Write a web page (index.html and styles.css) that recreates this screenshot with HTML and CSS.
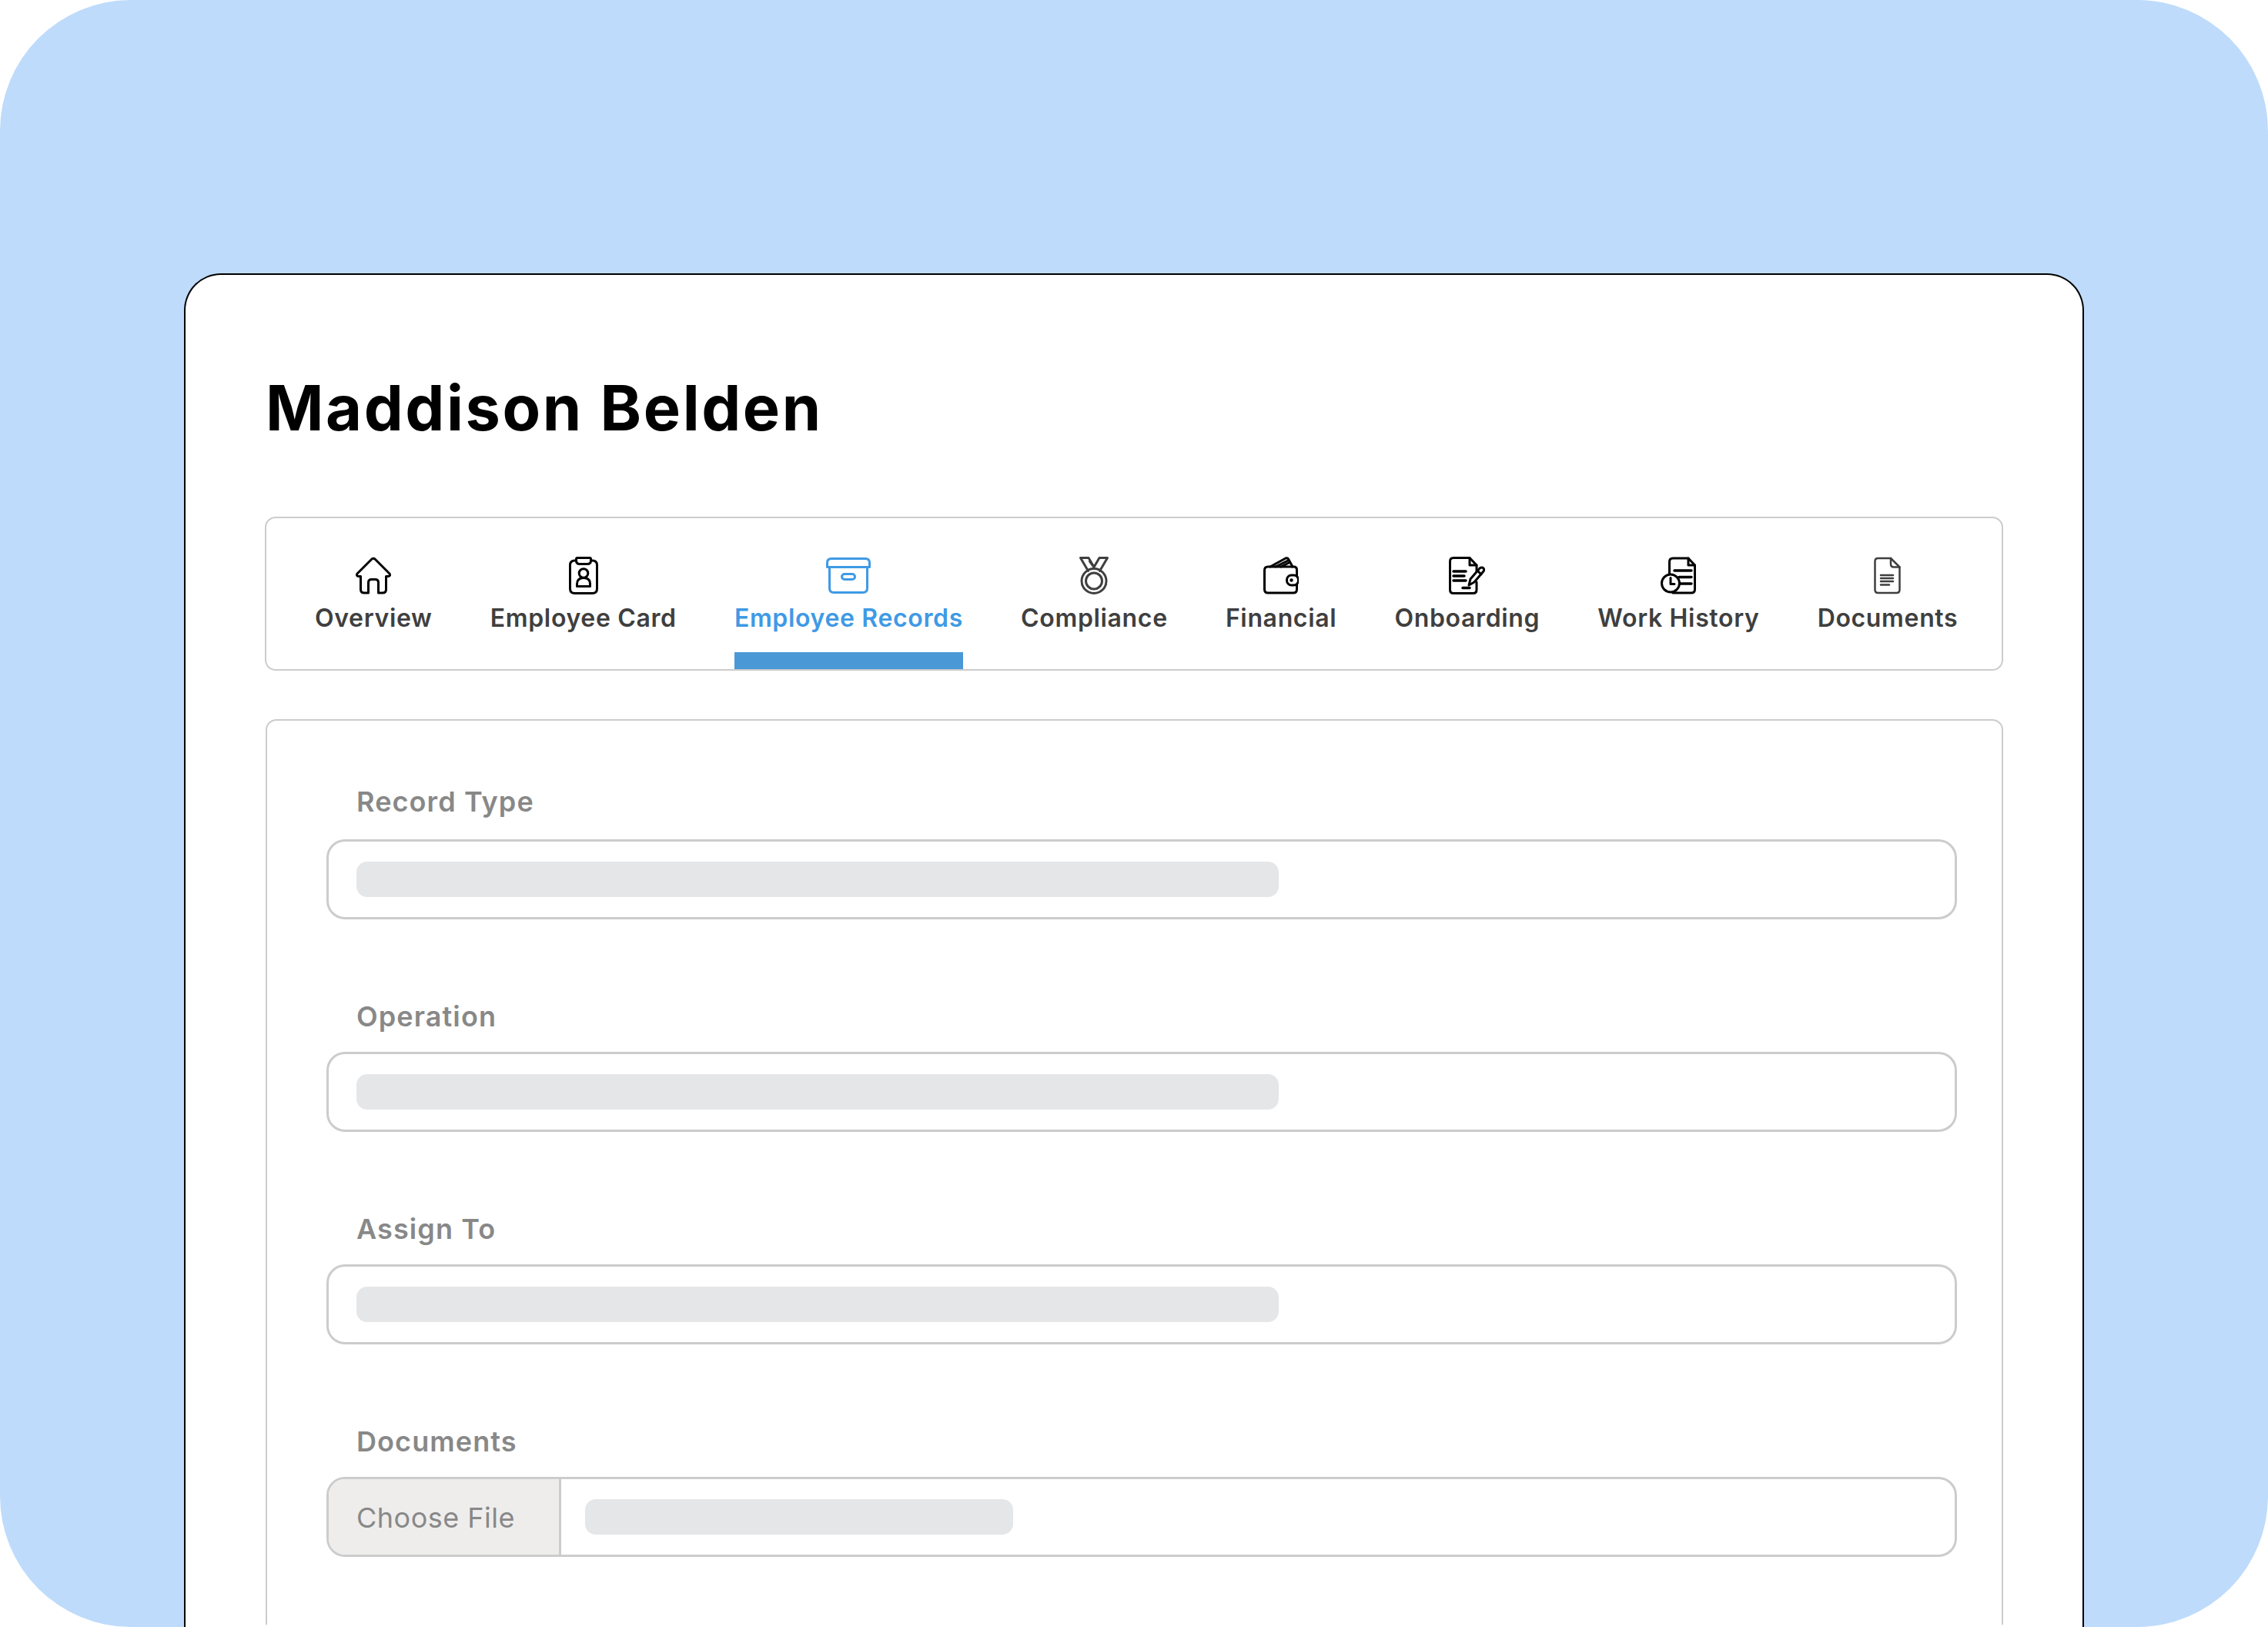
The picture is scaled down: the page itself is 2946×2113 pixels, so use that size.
FILE: index.html
```html
<!DOCTYPE html>
<html lang="en">
<head>
<meta charset="utf-8">
<title>Maddison Belden</title>
<link rel="stylesheet" href="styles.css">
</head>
<body>
<div class="backdrop">
  <main class="card">
    <h1 class="title">Maddison Belden</h1>
    <nav class="tabs">
      <a class="tab">
        <svg class="icon" width="46" height="48" viewBox="0 0 46 48"><path d="M21 2.500 2 21.500q-1.500 3 1.500 3.500H6.500V42q0 4.500 4.500 4.500h5.500V33q0-4 4-4h5q4 0 4 4v13.500H35q4.500 0 4.500-4.500V25h3q3-.5 1.500-3.500L25 2.500q-2-1.500-4 0Z"/></svg>
        <span>Overview</span>
      </a>
      <a class="tab">
        <svg class="icon" width="38" height="49" viewBox="0 0 38 49"><path d="M9.500 5H7.500Q1.500 5 1.500 11V41.500Q1.500 47.500 7.500 47.500H30.500Q36.500 47.500 36.500 41.500V11Q36.500 5 30.500 5H28.500"/><path d="M9.500 3Q9.500 1.500 11 1.500H27Q28.500 1.500 28.500 3V5Q28.500 9.500 24 9.500H14Q9.500 9.500 9.500 5Z"/><circle cx="19" cy="21.500" r="5.800"/><path d="M10.500 38.500V35.500Q10.500 27.500 19 27.500 27.500 27.500 27.500 35.500V38.500Z"/></svg>
        <span>Employee Card</span>
      </a>
      <a class="tab tab-active">
        <svg class="icon" width="58" height="47" viewBox="0 0 58 47"><path d="M1.500 12.500V7Q1.500 1.500 7 1.500H51Q56.500 1.500 56.500 7V12.500Z"/><path d="M4.500 12.500V40Q4.500 45.500 10 45.500H48Q53.500 45.500 53.500 40V12.500"/><rect x="20.500" y="21.500" width="17" height="7" rx="3.500"/></svg>
        <span>Employee Records</span>
      </a>
      <a class="tab">
        <svg class="icon icon-grey" width="38" height="49" viewBox="0 0 38 49"><circle cx="19" cy="31.500" r="16"/><circle cx="19" cy="31.500" r="10.500"/><path d="M11.500 18.500 1.500 1.500H12L19 13.500 26 1.500H36.500L26.500 18.500M13.500 6 19 13.500"/></svg>
        <span>Compliance</span>
      </a>
      <a class="tab">
        <svg class="icon" width="46" height="48" viewBox="0 0 46 48"><path d="M6 12.500H39.500Q43.500 12.500 43.500 16.500V42Q43.500 46.500 39 46.500H6Q1.500 46.500 1.500 42V17Q1.500 12.500 6 12.500Z"/><rect class="fill" x="30.500" y="23.500" width="15" height="13" rx="6"/><circle class="dot" cx="36.500" cy="30" r="2.200"/><path d="M9 12.500 29 1.500Q31.500.5 32.500 2.500L38 12.500M16 12.500 31 5M23 12.500 33 7.500"/></svg>
        <span>Financial</span>
      </a>
      <a class="tab">
        <svg class="icon" width="47" height="49" viewBox="0 0 47 49"><path d="M36 33V43Q36 47.500 31.500 47.500H6Q1.500 47.500 1.500 43V6Q1.500 1.500 6 1.500H27L36 11V19"/><path d="M27 1.500V11H36"/><path class="thick" d="M6 19H22M6 25H20M6 31H22M18 40.500H27"/><path class="fill" d="M26 37 28 29 40 15Q43 13 45 15 46.500 17.500 44.500 19.500L33 33ZM37 18 42 23"/></svg>
        <span>Onboarding</span>
      </a>
      <a class="tab">
        <svg class="icon" width="46" height="48" viewBox="0 0 46 48"><path d="M11.500 22V6Q11.500 1.500 16 1.500H36L44.500 10.500V42Q44.500 46.500 40 46.500H16"/><path d="M36 1.500V10.500H44.500"/><path class="thick" d="M18 17.500H40M24 26H40M25 34.500H40"/><circle class="fill" cx="13" cy="34" r="11.500"/><path d="M13 27V35H18"/></svg>
        <span>Work History</span>
      </a>
      <a class="tab">
        <svg class="icon icon-grey icon-thin" width="35" height="48" viewBox="0 0 35 48"><path d="M22 1.500H5.500Q1.500 1.500 1.500 5.500V42.500Q1.500 46.500 5.500 46.500H29.500Q33.500 46.500 33.500 42.500V13Z"/><path d="M22 1.500V9Q22 13 26 13H33.500"/><path d="M9 23.500H25M9 27.500H25M9 31.500H25M9 36H20"/></svg>
        <span>Documents</span>
      </a>
    </nav>
    <section class="panel">
      <div class="field">
        <div class="label">Record Type</div>
        <div class="input"><div class="bar"></div></div>
      </div>
      <div class="field">
        <div class="label">Operation</div>
        <div class="input"><div class="bar"></div></div>
      </div>
      <div class="field">
        <div class="label">Assign To</div>
        <div class="input"><div class="bar"></div></div>
      </div>
      <div class="field">
        <div class="label">Documents</div>
        <div class="input input-file">
          <div class="choose">Choose File</div>
          <div class="bar bar-file"></div>
        </div>
      </div>
    </section>
  </main>
</div>
</body>
</html>
```
FILE: styles.css
```css
* { box-sizing: border-box; }
html, body { margin: 0; padding: 0; background: #fff; }
body { font-family: "Inter", "Liberation Sans", sans-serif; }
.backdrop {
  width: 2946px;
  height: 2113px;
  background: #bedbfb;
  border-radius: 170px;
  padding: 355px 239px 0;
  overflow: hidden;
}
.card {
  width: 2468px;
  height: 1758px;
  background: #fff;
  border: 2px solid #000;
  border-bottom: 0;
  border-radius: 48px 48px 0 0;
  padding: 123px 103px 0 103px;
}
.title {
  margin: 0;
  font-size: 81px;
  line-height: 100px;
  font-weight: 700;
  letter-spacing: 2.6px;
  color: #000;
  padding-left: 1px;
}
.tabs {
  margin-top: 91px;
  height: 200px;
  border: 2px solid #ccc;
  border-radius: 14px;
  display: flex;
  gap: 75.2px;
  padding-left: 63px;
}
.tab {
  display: flex;
  flex-direction: column;
  align-items: center;
  padding-top: 50px;
  font-size: 32px;
  line-height: 40px;
  font-weight: 600;
  letter-spacing: 0.65px;
  color: #3f3f3f;
}
.tab span { margin-top: 11px; white-space: nowrap; }
.tab-active { color: #3f9ae5; border-bottom: 22px solid #4a98d6; }
.icon {
  display: block;
  height: 49px;
  fill: none;
  stroke: #000;
  stroke-width: 3;
  stroke-linecap: round;
  stroke-linejoin: round;
}
.tab-active .icon { stroke: #3f9ae5; }
.icon-grey { stroke: #3f3f3f; }
.icon-thin { stroke-width: 2.5; }
.icon .thick { stroke-width: 3.5; }
.icon .fill { fill: #fff; }
.icon .dot { fill: #000; stroke: none; }
.panel {
  margin-top: 63px;
  margin-left: 1px;
  height: 1176px;
  border: 2px solid #ccc;
  border-bottom: 0;
  border-radius: 14px 14px 0 0;
  padding: 81.5px 58px 0 77px;
}
.field { margin-bottom: 103px; }
.label {
  margin-left: 39px;
  font-size: 36px;
  line-height: 47px;
  font-weight: 600;
  letter-spacing: 1.1px;
  color: #888;
}
.input {
  margin-top: 22px;
  height: 104px;
  border: 3px solid #ccc;
  border-radius: 24px;
  padding: 26px 36px;
  background: #fff;
}
.field:first-child .input { margin-top: 25.5px; }
.bar {
  width: 1198px;
  height: 46px;
  background: #e5e6e8;
  border-radius: 14px;
}
.input-file {
  display: flex;
  align-items: center;
  padding: 0;
  overflow: hidden;
}
.choose {
  width: 302px;
  height: 100%;
  flex: none;
  background: #eeedec;
  border-right: 3px solid #ccc;
  padding-left: 36px;
  font-size: 36px;
  line-height: 100px;
  letter-spacing: 0.5px;
  color: #888;
}
.bar-file { width: 556px; margin-left: 31px; }
```
